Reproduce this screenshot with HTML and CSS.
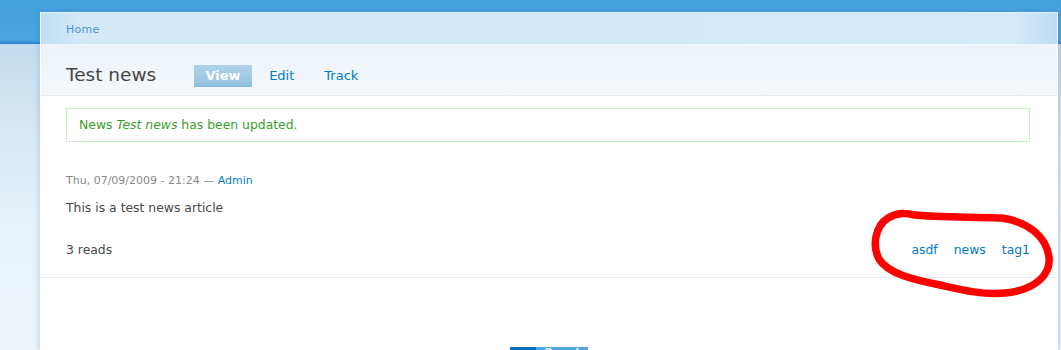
FILE: index.html
```html
<!DOCTYPE html>
<html lang="en">
<head>
    <meta charset="UTF-8">
    <meta name="viewport" content="width=device-width, initial-scale=1.0">
    <title>Test news</title>
    <link rel="stylesheet" href="styles.css">
</head>
<body>
    <div class="wrapper">
        <div class="breadcrumb"><a href="#">Home</a></div>

        <div class="title-bar">
            <h2 class="title">Test news</h2>
            <ul class="tabs">
                <li class="active"><a href="#">View</a></li>
                <li><a href="#">Edit</a></li>
                <li><a href="#">Track</a></li>
            </ul>
        </div>

        <div class="content">
            <div class="messages">News <em>Test news</em> has been updated.</div>

            <div class="node">
                <p class="submitted">Thu, 07/09/2009 - 21:24 — <a href="#">Admin</a></p>
                <p class="node-body">This is a test news article</p>
                <div class="node-links">
                    <span class="reads">3 reads</span>
                    <ul class="terms">
                        <li><a href="#">asdf</a></li>
                        <li><a href="#">news</a></li>
                        <li><a href="#">tag1</a></li>
                    </ul>
                </div>
            </div>
        </div>

        <div class="footer">
            <span class="badge"><span class="badge-drop"></span><span class="badge-text">Drupal</span></span>
        </div>
    </div>

    <!-- hand drawn marker around the tags -->
    <svg class="scribble" width="1061" height="350" viewBox="0 0 1061 350">
        <path d="M888 218 C898 212 906 213 915 215 C950 218 985 217 1002 218 C1028 222 1046 236 1049 257 C1051 274 1036 290 1005 293 C982 295 962 290 940 285 C915 280 888 274 879 259 C872 246 875 226 888 218 Z"
              fill="none" stroke="#ff0000" stroke-width="7.5" stroke-linejoin="round"/>
    </svg>
</body>
</html>
```

FILE: styles.css
```css
body {
    margin: 0;
    height: 350px;
    overflow: hidden;
    position: relative;
    font-family: "DejaVu Sans", Verdana, sans-serif;
    color: #494949;
    background:
        linear-gradient(to bottom, #44a0de 0, #4aa5e0 40px, #2f86d4 43px, #2f86d4 44px, transparent 44px),
        linear-gradient(to bottom, #c3dcee 44px, #dcebf6 150px, #eaf3fa 240px, #edf5fb 350px);
}

a {
    color: #027ac6;
    text-decoration: none;
}

ul {
    list-style: none;
    margin: 0;
    padding: 0;
}

.wrapper {
    margin: 12px 0 0 40px;
    width: 1016px;
    height: 338px;
    background-color: #fff;
    border-left: 1px solid #fff;
    border-right: 1px solid #fff;
    box-shadow: -3px 0 4px rgba(60, 120, 170, 0.15), 3px 0 4px rgba(60, 120, 170, 0.2);
}

.breadcrumb {
    height: 31px;
    border-top: 1px solid #e2f0fb;
    padding-left: 25px;
    font-size: 11px;
    line-height: 34px;
    letter-spacing: 0.3px;
    background:
        linear-gradient(to right, #bfe0f6 0, #d3e9f8 40px, #d5e9f8 975px, #bcdcf4 1016px);
}

.breadcrumb a {
    color: #4f93cf;
}

.title-bar {
    display: flex;
    align-items: flex-end;
    height: 42px;
    padding: 0 0 8px 25px;
    border-top: 1px solid #f3f8fc;
    border-bottom: 1px solid #e3ecf2;
    background: linear-gradient(to bottom, #ecf3fa, #f4f8fb);
}

.title {
    margin: 0;
    font-size: 18.5px;
    line-height: 24px;
    font-weight: normal;
    color: #454545;
    width: 114px;
}

.tabs {
    display: flex;
    margin-left: 14px;
}

.tabs li {
    margin-right: 4px;
}

.tabs a {
    display: block;
    height: 22px;
    line-height: 22px;
    padding: 0 13px;
    font-size: 13px;
}

.tabs .active a {
    padding: 0 11.5px;
    color: #fff;
    font-weight: bold;
    background: linear-gradient(to bottom, #aed3ea, #9dc8e3 70%, #88bbdd);
}

.content {
    padding: 12px 27px 0 25px;
}

.messages {
    border: 1px solid #c8efc2;
    padding: 0 12px;
    height: 32px;
    line-height: 32px;
    font-size: 12.4px;
    color: #3a9d2e;
}

.node {
    padding-top: 31px;
}

.submitted {
    margin: 0;
    font-size: 11px;
    color: #888;
    line-height: 16px;
}

.node-body {
    margin: 11px 0 0;
    font-size: 12.4px;
    line-height: 16px;
}

.node-links {
    display: flex;
    justify-content: space-between;
    margin: 26px -27px 0 -25px;
    padding: 0 27px 19px 25px;
    border-bottom: 1px solid #e3ecf2;
    font-size: 12.4px;
    line-height: 16px;
}

.terms {
    display: flex;
    gap: 16px;
}

.footer {
    display: flex;
    justify-content: center;
    padding-top: 69px;
}

.badge {
    display: flex;
    height: 12px;
    width: 78px;
}

.badge-drop {
    width: 26px;
    background-color: #0d6eb8;
}

.badge-text {
    flex: 1;
    background-color: #52a6dd;
    color: #fff;
    font-size: 9px;
    font-weight: bold;
    padding-left: 9px;
}

.scribble {
    position: absolute;
    top: 0;
    left: 0;
    pointer-events: none;
}
```
